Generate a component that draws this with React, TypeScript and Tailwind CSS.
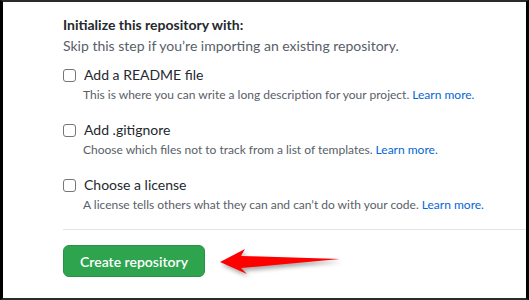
import React from "react";

const font = { fontFamily: 'Lato, "Open Sans", sans-serif' };

function Option({ title, desc }: { title: string; desc: string }) {
  return (
    <div className="flex flex-col">
      <label className="flex items-center h-[16px]">
        <span className="w-[13px] h-[13px] border border-[#767676] rounded-[3px] bg-white shrink-0" />
        <span className="ml-[8px] text-[14px] leading-[16px] text-[#24292e]">{title}</span>
      </label>
      <p className="ml-[20px] mt-[5px] text-[12px] leading-[14px] text-[#586069]">
        {desc} <span className="text-[#0366d6]">Learn more.</span>
      </p>
    </div>
  );
}

export default function App() {
  return (
    <div className="w-[529px] h-[300px] bg-white overflow-hidden relative" style={font}>
      <div className="absolute inset-0 border-t-2 border-t-[#2b2b2b] border-l-[3px] border-l-black border-r-[3px] border-r-black border-b-2 border-b-[#2b2b2b] pointer-events-none" />
      <div className="pl-[63px] pt-[16px]">
        <h3 className="text-[14px] leading-[18px] font-bold text-[#24292e]">Initialize this repository with:</h3>
        <p className="text-[14px] leading-[18px] text-[#586069] mt-[3px]">Skip this step if you’re importing an existing repository.</p>
        <div className="mt-[12px] flex flex-col gap-[20px]">
          <Option title="Add a README file" desc="This is where you can write a long description for your project." />
          <Option title="Add .gitignore" desc="Choose which files not to track from a list of templates." />
          <Option title="Choose a license" desc="A license tells others what they can and can’t do with your code." />
        </div>
        <div className="mt-[17px] border-t border-[#e1e4e8]" />
        <div className="mt-[15px] flex items-start">
          <button className="w-[142px] h-[32px] rounded-[6px] bg-[#2ea44f] border border-[#2a9147] text-white text-[14px] font-semibold">
            Create repository
          </button>
          <svg width="140" height="40" viewBox="0 0 140 40" className="ml-[5px] -mt-[5px]" style={{ filter: "drop-shadow(2px 3px 2px rgba(0,0,0,0.35))" }}>
            <polygon points="10,22 35,9 31,16 130,19 31,28 37,34" fill="#ff0000" />
          </svg>
        </div>
      </div>
    </div>
  );
}
